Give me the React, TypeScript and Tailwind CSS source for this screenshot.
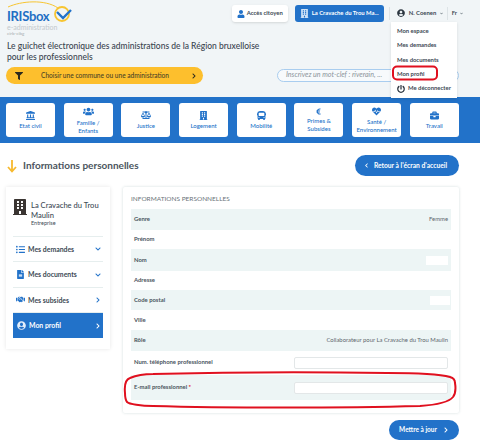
import React from 'react';
import {
  FaBalanceScale,
  FaBriefcase,
  FaBuilding,
  FaBus,
  FaChevronDown,
  FaChevronLeft,
  FaChevronRight,
  FaEuroSign,
  FaFileAlt,
  FaFilter,
  FaHandshake,
  FaHeartbeat,
  FaLandmark,
  FaListUl,
  FaPowerOff,
  FaUser,
  FaUserCircle,
  FaUsers,
} from 'react-icons/fa';

const categories = [
  { label: ['Etat civil'], icon: FaLandmark, size: 'text-[9px]' },
  { label: ['Famille /', 'Enfants'], icon: FaUsers, size: 'text-[11px]' },
  { label: ['Justice'], icon: FaBalanceScale, size: 'text-[10px]' },
  { label: ['Logement'], icon: FaBuilding, size: 'text-[9px]' },
  { label: ['Mobilité'], icon: FaBus, size: 'text-[9px]' },
  { label: ['Primes &', 'Subsides'], icon: FaEuroSign, size: 'text-[7px]' },
  { label: ['Santé /', 'Environnement'], icon: FaHeartbeat, size: 'text-[9px]' },
  { label: ['Travail'], icon: FaBriefcase, size: 'text-[9px]' },
];

const rows = [
  { label: 'Genre', value: 'Femme', height: 'h-[21px]', tint: true },
  { label: 'Prénom', height: 'h-[19px]' },
  { label: 'Nom', mask: 'w-[22px]', height: 'h-[22px]', tint: true },
  { label: 'Adresse', height: 'h-[19px]' },
  { label: 'Code postal', mask: 'w-[20px] mr-[-2px]', height: 'h-[20px]', tint: true },
  { label: 'Ville', height: 'h-[20px]' },
  { label: 'Rôle', value: 'Collaborateur pour La Cravache du Trou Maulin', height: 'h-[21px]', tint: true },
];

const sideItems = [
  { label: 'Mes demandes', icon: FaListUl, open: true },
  { label: 'Mes documents', icon: FaFileAlt, open: true },
  { label: 'Mes subsides', icon: FaHandshake, open: false },
];

const menuItems = ['Mon espace', 'Mes demandes', 'Mes documents', 'Mon profil'];

const Logo = () => (
  <div className="flex h-[34px] flex-col">
    <div className="relative h-[19px] w-[72px]">
      <svg className="absolute left-0 top-[-5px]" width="74" height="26" viewBox="0 0 74 26" fill="none">
        <path d="M1 7 C14 1 38 -1 51 8" stroke="#f7c531" strokeWidth="1" />
        <circle cx="55" cy="14" r="7" stroke="#f7c531" strokeWidth="1.8" />
        <path d="M50 12 L56 18 L64 10" stroke="#2272c9" strokeWidth="2.4" />
      </svg>
      <span className="absolute left-0 top-[4px] text-[13px] font-bold leading-[14px] tracking-[-0.3px] text-[#1f6fc4]">
        IRISbox
      </span>
    </div>
    <span className="mt-[-1px] text-[7px] leading-[8px] text-[#c3c9cd]">e-administration</span>
    <span className="text-[4.5px] font-bold leading-[6px] text-[#b9bfc3]">cirb-cibg</span>
  </div>
);

const Header = () => (
  <header className="relative h-[97px] bg-[#f1f5f7] pl-[7px] pr-[17px] pt-[5px]">
    <div className="flex h-[36px] justify-between">
      <Logo />
      <div className="flex h-[17px] items-center whitespace-nowrap text-[5.9px] font-bold">
        <div className="flex h-[17px] w-[56px] items-center justify-center gap-[2px] rounded-[3px] bg-white text-[#3d4a55] shadow-sm">
          <FaUser className="text-[8px] text-[#2272c9]" />
          Accès citoyen
        </div>
        <div className="ml-[7px] flex h-[17px] w-[89px] items-center justify-center gap-[3px] rounded-[3px] bg-[#2272c9] text-white">
          <FaBuilding className="text-[9px] text-[#cfe2f6]" />
          La Cravache du Trou Ma...
        </div>
        <div className="ml-[5px] h-[13px] w-px bg-[#dde3e6]" />
        <div className="ml-[7px] flex w-[50px] items-center gap-[4px] text-[#3d4a55]">
          <FaUserCircle className="text-[8px] text-[#2c3640]" />
          N. Coenen
          <FaChevronDown className="text-[3px]" />
        </div>
        <div className="h-[13px] w-px bg-[#dde3e6]" />
        <div className="ml-[4px] flex items-center gap-[3px] text-[#3d4a55]">
          Fr
          <FaChevronDown className="text-[3px]" />
        </div>
      </div>
    </div>
    <p className="text-[8.5px] font-medium leading-[11px] text-[#3a4450]">
      Le guichet électronique des administrations de la Région bruxelloise
      <br />
      pour les professionnels
    </p>
    <div className="mt-[4px] flex items-center justify-between pr-[4px]">
      <div className="ml-[-1px] flex h-[17px] w-[197px] items-center rounded-full bg-[#fdbf2d] pl-[9px] pr-[6px] text-[#4a4326]">
        <FaFilter className="text-[8px] text-[#2c2a1e]" />
        <span className="ml-[18px] flex-1 whitespace-nowrap text-[6.6px] font-medium">Choisir une commune ou une administration</span>
        <FaChevronRight className="text-[6px] text-[#2c2a1e]" />
      </div>
      <div className="flex h-[13px] w-[182px] items-center rounded-full border border-[#a9cdef] bg-[#f7fafc] pl-[8px] text-[7.1px] italic text-[#8b949b]">
        Inscrivez un mot-clef : riverain, ...
      </div>
    </div>
    <div className="absolute left-[391px] top-[22px] z-10 flex h-[76px] w-[66px] flex-col whitespace-nowrap bg-white pl-[6px] pt-[2px] text-[5.9px] font-bold text-[#3d4a55] shadow-sm">
      {menuItems.map((item) => (
        <div key={item} className="flex h-[14.4px] items-center">
          {item}
        </div>
      ))}
      <div className="flex h-[14.4px] items-center gap-[3px]">
        <FaPowerOff className="text-[8px] text-[#2c3640]" />
        Me déconnecter
      </div>
    </div>
    <svg className="absolute left-[390px] top-[64px] z-20" width="50" height="18" viewBox="0 0 50 18" fill="none">
      <rect x="3" y="2.5" width="44" height="13" rx="4" stroke="#e0101f" strokeWidth="2" />
    </svg>
  </header>
);

const CategoryBar = () => (
  <nav className="flex h-[46px] items-start gap-[8.7px] bg-[#2272c9] pl-[6px] pt-[6px]">
    {categories.map((cat) => (
      <div
        key={cat.label[0]}
        className="flex h-[34px] w-[49px] flex-col items-center justify-center rounded-[3px] bg-white text-center text-[6px] font-medium leading-[7.5px] text-[#2272c9]"
      >
        <cat.icon className={`${cat.size} mb-[2px]`} />
        {cat.label.map((line) => (
          <span key={line}>{line}</span>
        ))}
      </div>
    ))}
  </nav>
);

const Sidebar = () => (
  <aside className="h-[162px] w-[104px] bg-white px-[7px] pt-[12px] shadow-[0_0_4px_rgba(0,0,0,0.1)]">
    <div className="flex h-[38px] gap-[4px] border-b border-[#e6eeee]">
      <FaBuilding className="mt-[-1px] h-[18px] w-[14px] shrink-0 text-[#3a3532]" />
      <div className="mt-[1px] text-[#3d4a55]">
        <div className="whitespace-nowrap text-[7.6px] font-medium leading-[10px]">La Cravache du Trou</div>
        <div className="text-[7.6px] font-medium leading-[10px]">Maulin</div>
        <div className="text-[5.5px] leading-[7px]">Entreprise</div>
      </div>
    </div>
    {sideItems.map((item) => (
      <div
        key={item.label}
        className="flex h-[25.4px] items-center gap-[3px] border-b border-[#e6eeee] pl-[3px] pr-[2px] text-[6.9px] font-bold text-[#3d4a55] last:border-b-0"
      >
        <item.icon className="text-[9px] text-[#2272c9]" />
        <span className="flex-1">{item.label}</span>
        {item.open ? (
          <FaChevronDown className="text-[6px] text-[#2272c9]" />
        ) : (
          <FaChevronRight className="text-[6px] text-[#2272c9]" />
        )}
      </div>
    ))}
    <div className="flex h-[25px] items-center gap-[3px] bg-[#2272c9] pl-[4px] pr-[2px] text-[6.9px] font-bold text-white">
      <FaUserCircle className="text-[9px] text-[#e3eefa]" />
      <span className="flex-1">Mon profil</span>
      <FaChevronRight className="text-[6px]" />
    </div>
  </aside>
);

const InputRow = ({ label, tint, required, height, top }: { label: string; tint?: boolean; required?: boolean; height: string; top: string }) => (
  <div className={`flex justify-between px-[3px] ${top} ${height} ${tint ? 'bg-[#edf5f5]' : ''}`}>
    <span className="text-[5.9px] font-bold leading-[9px] text-[#4b555e]">
      {label}
      {required && <span className="text-[#e0101f]"> *</span>}
    </span>
    <div className="h-[12px] w-[154px] rounded-[2px] border border-[#e3e7e8] bg-white" />
  </div>
);

const PersonalInfo = () => (
  <div>
    <section className="relative h-[226px] w-[336px] rounded-[2px] bg-white px-[8px] pt-[22px] shadow-[0_0_3px_rgba(40,90,90,0.2)]">
      <h2 className="absolute left-[8px] top-[8px] text-[6.5px] leading-[8px] text-[#6a7379]">INFORMATIONS PERSONNELLES</h2>
      {rows.map((row) => (
        <div
          key={row.label}
          className={`flex items-center justify-between px-[3px] ${row.height} ${row.tint ? 'bg-[#edf5f5]' : ''}`}
        >
          <span className="text-[5.9px] font-bold text-[#4b555e]">{row.label}</span>
          {row.value && <span className="text-[5.9px] text-[#5d666d]">{row.value}</span>}
          {row.mask && <div className={`h-[9px] bg-white ${row.mask}`} />}
        </div>
      ))}
      <InputRow label="Num. téléphone professionnel" height="h-[24px]" top="pt-[6px]" />
      <InputRow label="E-mail professionnel" height="h-[25px]" top="pt-[7px]" tint required />
      <svg className="absolute left-0 top-[184px]" width="336" height="38" viewBox="0 0 336 38" fill="none">
        <path
          d="M2 22 C1 12 4 8 7 7 C14 4 22 3 30 3 C110 1 200 1 264 2 C290 2 316 3 327 6 C331 7 332 9 332 12 C333 18 333 22 330 26 C326 31 312 34 297 35 C220 37 100 37 30 35 C18 35 6 33 4 31 C2 28 2 25 2 22 Z"
          stroke="#e0101f"
          strokeWidth="2"
        />
      </svg>
    </section>
    <div className="mt-[7px] flex justify-end">
      <button className="flex h-[20px] w-[70px] items-center justify-center gap-[6px] rounded-full bg-[#2272c9] text-[6.5px] font-bold text-white">
        Mettre à jour
        <FaChevronRight className="text-[6px]" />
      </button>
    </div>
  </div>
);

const App = () => {
  return (
    <div className="h-[445px] w-[480px] overflow-hidden bg-white font-['Lato',sans-serif]">
      <Header />
      <CategoryBar />
      <div className="flex h-[44px] items-center justify-between pl-[7px] pr-[21px] pt-[1px]">
        <div className="flex items-center gap-[6px]">
          <svg width="10" height="14" viewBox="0 0 10 14" fill="none">
            <path d="M5 1 V12 M1 8 L5 12.5 L9 8" stroke="#f7b92e" strokeWidth="1.8" />
          </svg>
          <h1 className="text-[10px] font-bold text-[#4b555e]">Informations personnelles</h1>
        </div>
        <button className="flex h-[21px] w-[104px] items-center justify-center gap-[5px] whitespace-nowrap rounded-full bg-[#2272c9] pr-[3px] text-[6.7px] font-bold text-white">
          <FaChevronLeft className="text-[5px]" />
          Retour à l'écran d'accueil
        </button>
      </div>
      <main className="flex gap-[13px] pl-[6px]">
        <Sidebar />
        <PersonalInfo />
      </main>
    </div>
  );
};

export default App;
